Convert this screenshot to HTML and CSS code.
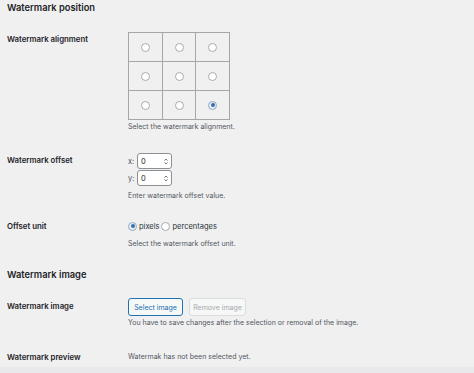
FILE: index.html
```html
<!DOCTYPE html>
<html>
<head>
<meta charset="utf-8">
<link rel="stylesheet" href="styles.css">
</head>
<body>
<div class="page">
  <h2 class="heading h-first">Watermark position</h2>

  <div class="row row-align">
    <div class="label label-align">Watermark alignment</div>
    <div class="field">
      <div class="align-grid">
        <div class="cell"><span class="radio"></span></div>
        <div class="cell"><span class="radio"></span></div>
        <div class="cell"><span class="radio"></span></div>
        <div class="cell"><span class="radio"></span></div>
        <div class="cell"><span class="radio"></span></div>
        <div class="cell"><span class="radio"></span></div>
        <div class="cell"><span class="radio"></span></div>
        <div class="cell"><span class="radio"></span></div>
        <div class="cell"><span class="radio checked"></span></div>
      </div>
      <p class="desc">Select the watermark alignment.</p>
    </div>
  </div>

  <div class="row row-offset">
    <div class="label label-offset">Watermark offset</div>
    <div class="field">
      <div class="offset-line">
        <span class="axis">x:</span>
        <span class="num"><span class="num-val">0</span><svg class="spin" width="4" height="7" viewBox="0 0 4 7"><path d="M0.5 2.6 L2 1 L3.5 2.6 M0.5 4.4 L2 6 L3.5 4.4" fill="none" stroke="#50575e" stroke-width="0.8"/></svg></span>
      </div>
      <div class="offset-line">
        <span class="axis">y:</span>
        <span class="num"><span class="num-val">0</span><svg class="spin" width="4" height="7" viewBox="0 0 4 7"><path d="M0.5 2.6 L2 1 L3.5 2.6 M0.5 4.4 L2 6 L3.5 4.4" fill="none" stroke="#50575e" stroke-width="0.8"/></svg></span>
      </div>
      <p class="desc desc-offset">Enter watermark offset value.</p>
    </div>
  </div>

  <div class="row row-unit">
    <div class="label">Offset unit</div>
    <div class="field">
      <div class="unit-line">
        <span class="radio checked"></span><span class="unit-text">pixels</span>
        <span class="radio"></span><span class="unit-text">percentages</span>
      </div>
      <p class="desc desc-unit">Select the watermark offset unit.</p>
    </div>
  </div>

  <h2 class="heading h-second">Watermark image</h2>

  <div class="row row-image">
    <div class="label label-image">Watermark image</div>
    <div class="field">
      <div class="buttons">
        <span class="btn btn-primary">Select image</span>
        <span class="btn btn-disabled">Remove image</span>
      </div>
      <p class="desc desc-image">You have to save changes after the selection or removal of the image.</p>
    </div>
  </div>

  <div class="row row-preview">
    <div class="label">Watermark preview</div>
    <div class="field">
      <p class="desc desc-preview">Watermak has not been selected yet.</p>
    </div>
  </div>
</div>
<div class="bottom-strip"></div>
</body>
</html>
```

FILE: styles.css
```css
html, body {
  margin: 0;
  padding: 0;
}
body {
  background: #f0f0f1;
  font-family: Inter, "Liberation Sans", sans-serif;
  color: #1d2327;
  width: 474px;
  height: 373px;
  overflow: hidden;
  position: relative;
}
.page {
  padding: 0 0 0 7px;
}
.heading {
  margin: 0;
  font-size: 9.3px;
  font-weight: 600;
  line-height: 14px;
}
.h-first {
  padding-top: 1px;
}
.h-second {
  margin-top: 18px;
}
.row {
  display: grid;
  grid-template-columns: 121px 1fr;
}
.label {
  font-size: 7.8px;
  font-weight: 600;
  line-height: 12px;
}
.label-align {
  padding-top: 1px;
}
.field {
  display: flex;
  flex-direction: column;
  align-items: flex-start;
}
.desc {
  margin: 0;
  font-size: 7px;
  line-height: 12px;
  color: #50575e;
  white-space: nowrap;
}
.row-align {
  margin-top: 17px;
}
.align-grid {
  display: grid;
  grid-template-columns: 33px 32px 33px;
  grid-template-rows: 28px 28px 28px;
  gap: 1px;
  padding: 1px;
  background: #a4a6a9;
}
.cell {
  background: #f0f0f1;
  display: flex;
  align-items: center;
  justify-content: center;
}
.radio {
  width: 9px;
  height: 9px;
  border: 1px solid #a7aaad;
  border-radius: 50%;
  background: #fff;
  box-sizing: border-box;
  display: inline-flex;
  align-items: center;
  justify-content: center;
  flex: none;
}
.radio.checked {
  border-color: #8fa9c9;
  background: #e8eef6;
}
.radio.checked::after {
  content: "";
  width: 4px;
  height: 4px;
  border-radius: 50%;
  background: #3a6ea5;
}
.align-grid + .desc {
  margin-top: 1px;
}
.row-offset {
  margin-top: 20px;
}
.label-offset {
  padding-top: 1px;
}
.offset-line {
  display: flex;
  align-items: center;
  height: 16px;
  margin-bottom: 1px;
}
.axis {
  font-size: 7.5px;
  color: #50575e;
  width: 9px;
}
.num {
  width: 35px;
  height: 16px;
  box-sizing: border-box;
  border: 1px solid #8c8f94;
  border-radius: 3px;
  background: #fff;
  display: flex;
  align-items: center;
  justify-content: space-between;
  padding: 0 3px 0 3px;
}
.num-val {
  font-size: 7.5px;
  color: #1d2327;
}
.desc-offset {
  margin-top: 3px;
}
.row-unit {
  margin-top: 18px;
}
.unit-line {
  display: flex;
  align-items: center;
  height: 12px;
  font-size: 7.5px;
}
.unit-text {
  margin: 0 2px 0 2px;
  color: #2c3338;
}
.desc-unit {
  margin-top: 6px;
}
.row-image {
  margin-top: 16px;
}
.label-image {
  padding-top: 2px;
}
.buttons {
  display: flex;
  gap: 6px;
}
.btn {
  height: 18px;
  box-sizing: border-box;
  border-radius: 3px;
  font-size: 7px;
  display: inline-flex;
  align-items: center;
  justify-content: center;
  white-space: nowrap;
  background: #f6f7f7;
}
.btn-primary {
  border: 1px solid #2271b1;
  color: #2271b1;
  width: 55px;
}
.btn-disabled {
  border: 1px solid #dcdcde;
  color: #a7aaad;
  width: 57px;
}
.desc-image {
  margin-top: 1px;
}
.row-preview {
  margin-top: 22px;
}
.bottom-strip {
  position: absolute;
  left: 0;
  right: 0;
  bottom: 0;
  height: 6px;
  background: #e9e9eb;
}
```
